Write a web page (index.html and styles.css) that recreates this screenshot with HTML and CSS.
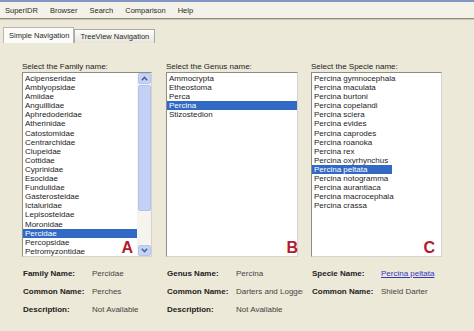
FILE: index.html
```html
<!DOCTYPE html>
<html lang="en">
<head>
<meta charset="UTF-8" />
<title>SuperIDR</title>
<link rel="stylesheet" href="styles.css">
</head>
<body>
<div class="topstrip"></div>
<div class="menubar">
  <span>SuperIDR</span>
  <span>Browser</span>
  <span>Search</span>
  <span>Comparison</span>
  <span>Help</span>
</div>
<div class="menusep"></div>
<div class="tabs">
  <div class="tab active">Simple Navigation</div>
  <div class="tab">TreeView Navigation</div>
</div>
<div class="panel">
  <div class="col">
    <div class="caption">Select the Family name:</div>
    <div class="listbox family">
      <ul class="items">
        <li>Acipenseridae</li>
        <li>Amblyopsidae</li>
        <li>Amiidae</li>
        <li>Anguillidae</li>
        <li>Aphredoderidae</li>
        <li>Atherinidae</li>
        <li>Catostomidae</li>
        <li>Centrarchidae</li>
        <li>Clupeidae</li>
        <li>Cottidae</li>
        <li>Cyprinidae</li>
        <li>Esocidae</li>
        <li>Fundulidae</li>
        <li>Gasterosteidae</li>
        <li>Ictaluridae</li>
        <li>Lepisosteidae</li>
        <li>Moronidae</li>
        <li class="selected">Percidae</li>
        <li>Percopsidae</li>
        <li>Petromyzontidae</li>
      </ul>
      <div class="scrollbar">
        <div class="sb-btn"><svg width="7" height="5" viewBox="0 0 7 5"><path d="M0.8 4.2 L3.5 1.4 L6.2 4.2" fill="none" stroke="#4d6185" stroke-width="1.5"/></svg></div>
        <div class="sb-thumb"></div>
        <div class="sb-track"></div>
        <div class="sb-btn"><svg width="7" height="5" viewBox="0 0 7 5"><path d="M0.8 0.8 L3.5 3.6 L6.2 0.8" fill="none" stroke="#4d6185" stroke-width="1.5"/></svg></div>
      </div>
      <span class="tag tag-a">A</span>
    </div>
    <div class="info">
      <span class="key">Family Name:</span><span class="val">Percidae</span>
      <span class="key">Common Name:</span><span class="val">Perches</span>
      <span class="key">Description:</span><span class="val">Not Available</span>
    </div>
  </div>

  <div class="col">
    <div class="caption">Select the Genus name:</div>
    <div class="listbox genus">
      <ul class="items">
        <li>Ammocrypta</li>
        <li>Etheostoma</li>
        <li>Perca</li>
        <li class="selected">Percina</li>
        <li>Stizostedion</li>
      </ul>
      <span class="tag tag-b">B</span>
    </div>
    <div class="info">
      <span class="key">Genus Name:</span><span class="val">Percina</span>
      <span class="key">Common Name:</span><span class="val">Darters and Loggerperches</span>
      <span class="key">Description:</span><span class="val">Not Available</span>
    </div>
  </div>

  <div class="col">
    <div class="caption">Select the Specie name:</div>
    <div class="listbox specie">
      <ul class="items">
        <li>Percina gymnocephala</li>
        <li>Percina maculata</li>
        <li>Percina burtoni</li>
        <li>Percina copelandi</li>
        <li>Percina sciera</li>
        <li>Percina evides</li>
        <li>Percina caprodes</li>
        <li>Percina roanoka</li>
        <li>Percina rex</li>
        <li>Percina oxyrhynchus</li>
        <li class="selected short">Percina peltata</li>
        <li>Percina notogramma</li>
        <li>Percina aurantiaca</li>
        <li>Percina macrocephala</li>
        <li>Percina crassa</li>
      </ul>
      <span class="tag tag-c">C</span>
    </div>
    <div class="info">
      <span class="key">Specie Name:</span><span class="val"><a href="#">Percina peltata</a></span>
      <span class="key">Common Name:</span><span class="val">Shield Darter</span>
    </div>
  </div>
</div>
</body>
</html>
```

FILE: styles.css
```css
body {
  margin: 0;
  width: 474px;
  height: 331px;
  overflow: hidden;
  background: #ece9d8;
  font-family: 'Liberation Sans', Arial, sans-serif;
  font-size: 8px;
  color: #1c1c1c;
}

.topstrip {
  height: 2px;
  background: #8393c4;
}

.menubar {
  height: 16px;
  display: flex;
  align-items: center;
  gap: 12px;
  padding-left: 5px;
  background: #f4f2e8;
  font-size: 7.5px;
  color: #2a2a2a;
}

.menusep {
  height: 0;
  border-top: 1px solid #8f8d80;
  border-bottom: 1px solid #c9c7b8;
}

.tabs {
  display: flex;
  align-items: flex-end;
  margin: 7px 0 0 3px;
  font-size: 7.5px;
}
.tab {
  height: 13px;
  line-height: 13px;
  padding: 0 5px;
  border: 1px solid #a6aaa6;
  border-bottom: none;
  background: linear-gradient(#fdfdfb, #e6e4dc);
  color: #2a2a2a;
}
.tab.active {
  height: 15px;
  line-height: 15px;
  padding: 0 4px 0 5px;
  background: #fbfbf9;
  border-color: #b8b8b0;
}

.panel {
  display: grid;
  grid-template-columns: 144px 145px 1fr;
  padding-left: 22px;
  margin-top: 19px;
}

.caption {
  height: 10px;
  line-height: 10px;
  color: #222;
}

.listbox {
  position: relative;
  display: flex;
  box-sizing: border-box;
  height: 185px;
  background: #fff;
  border: 1px solid;
  border-color: #8e8c84 #d6d4c9 #d6d4c9 #8e8c84;
}
.listbox.family { width: 130px; }
.listbox.genus { width: 132px; }
.listbox.specie { width: 131px; }

.items {
  flex: 1;
  margin: 0;
  padding: 1px 0 0;
  list-style: none;
  overflow: hidden;
}
.items li {
  height: 9.1px;
  line-height: 9.1px;
  padding-left: 2px;
  white-space: nowrap;
}
.items li.selected {
  background: #316ac5;
  color: #fff;
}
.items li.short {
  width: 78px;
}

.scrollbar {
  width: 13px;
  display: flex;
  flex-direction: column;
  padding: 0 0 0 1px;
  background: #f5f4ef;
}
.sb-btn {
  height: 11px;
  box-sizing: border-box;
  display: flex;
  align-items: center;
  justify-content: center;
  background: #c4d3f7;
  border: 1px solid #b3c6ef;
  border-radius: 2px;
}
.sb-thumb {
  height: 124px;
  margin-top: 1px;
  background: #c2d1f5;
  border: 1px solid #afc3ed;
  border-radius: 2px;
}
.sb-track {
  flex: 1;
}

.tag {
  position: absolute;
  bottom: 0;
  font-size: 16px;
  font-weight: bold;
  line-height: 1;
  color: #b41b2e;
}
.tag-a { right: 18px; }
.tag-b { right: -1px; }
.tag-c { right: 6px; }

.info {
  display: grid;
  grid-template-columns: 69px 67px;
  row-gap: 8px;
  margin: 12px 0 0 1px;
  line-height: 10px;
}
.key {
  font-weight: bold;
  color: #222;
}
.val {
  color: #444;
  white-space: nowrap;
  overflow: hidden;
}
.val a {
  color: #3535c4;
}
```
